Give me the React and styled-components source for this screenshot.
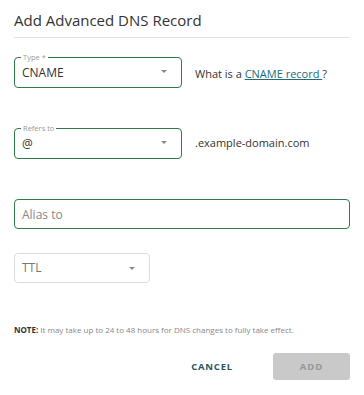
import React from "react";
import styled, { createGlobalStyle } from "styled-components";

const Global = createGlobalStyle`
  html, body {
    margin: 0;
    padding: 0;
    background: #fff;
    font-family: "Open Sans", "Liberation Sans", sans-serif;
    color: #333;
  }
`;

const Dialog = styled.div`
  width: 364px;
  height: 395px;
  padding: 0 14px;
  box-sizing: border-box;
  display: flex;
  flex-direction: column;
`;

const Title = styled.h2`
  margin: 0;
  padding-top: 10px;
  padding-bottom: 7px;
  font-size: 15px;
  font-weight: 500;
  line-height: 20px;
  color: #333;
  border-bottom: 1px solid #e2e2e2;
`;

const Row = styled.div`
  display: flex;
  align-items: center;
  gap: 13px;
  margin-top: ${(p) => p.top}px;
`;

const Field = styled.fieldset`
  margin: 0;
  padding: 0 7px 0 7px;
  width: ${(p) => p.width}px;
  height: ${(p) => (p.legend ? 36 : 30)}px;
  margin-top: ${(p) => (p.legend ? -6 : 0)}px;
  box-sizing: border-box;
  border: 1px solid ${(p) => (p.active ? "#2f7a47" : "#dcdcdc")};
  border-radius: 4px;
  display: flex;
  align-items: center;
  justify-content: space-between;
  position: relative;

  legend {
    font-size: 7.5px;
    color: #9a9a9a;
    padding: 0 2px;
    margin-left: -1px;
    line-height: 10px;
  }
`;

const Value = styled.span`
  font-size: 12px;
  color: ${(p) => (p.muted ? "#777" : "#333")};
  line-height: 16px;
  margin-top: ${(p) => (p.legend ? -4 : 0)}px;
`;

const Caret = styled.span`
  width: 0;
  height: 0;
  border-left: 3.5px solid transparent;
  border-right: 3.5px solid transparent;
  border-top: 3.5px solid #8a8a8a;
  margin-right: 7px;
  margin-top: ${(p) => (p.legend ? -6 : 0)}px;
`;

const Side = styled.span`
  font-size: 11px;
  color: #333;
  margin-top: ${(p) => p.shift || 0}px;

  a {
    color: #1b6e78;
    text-decoration: underline;
  }
`;

const Input = styled.div`
  margin-top: 40px;
  height: 30px;
  box-sizing: border-box;
  border: 1px solid #2f7a47;
  border-radius: 4px;
  padding: 0 7px;
  display: flex;
  align-items: center;
  font-size: 12px;
  color: #888;
`;

const Note = styled.p`
  margin: 41px 0 0;
  font-size: 8px;
  color: #888;
  line-height: 11px;

  b {
    color: #333;
    font-weight: 700;
  }
`;

const Actions = styled.div`
  display: flex;
  justify-content: flex-end;
  align-items: center;
  gap: 40px;
  margin-top: 18px;
`;

const TextButton = styled.button`
  border: none;
  background: none;
  font-family: inherit;
  font-size: 9.5px;
  font-weight: 700;
  letter-spacing: 0.8px;
  color: #1f5a60;
  padding: 0;
`;

const SolidButton = styled.button`
  border: none;
  width: 77px;
  height: 27px;
  border-radius: 3px;
  background: #c9c9c9;
  font-family: inherit;
  font-size: 9.5px;
  font-weight: 700;
  letter-spacing: 1px;
  color: #979797;
`;

export default function App() {
  return (
    <>
      <Global />
      <Dialog>
        <Title>Add Advanced DNS Record</Title>
        <Row top={20}>
          <Field width={168} active legend>
            <legend>Type *</legend>
            <Value legend>CNAME</Value>
            <Caret legend />
          </Field>
          <Side>
            What is a <a href="#">CNAME record </a>?
          </Side>
        </Row>
        <Row top={41}>
          <Field width={168} active legend>
            <legend>Refers to</legend>
            <Value legend>@</Value>
            <Caret legend />
          </Field>
          <Side shift={-3}>.example-domain.com</Side>
        </Row>
        <Input>Alias to</Input>
        <Row top={24}>
          <Field width={136}>
            <Value muted>TTL</Value>
            <Caret />
          </Field>
        </Row>
        <Note>
          <b>NOTE:</b> It may take up to 24 to 48 hours for DNS changes to fully take effect.
        </Note>
        <Actions>
          <TextButton>CANCEL</TextButton>
          <SolidButton>ADD</SolidButton>
        </Actions>
      </Dialog>
    </>
  );
}
